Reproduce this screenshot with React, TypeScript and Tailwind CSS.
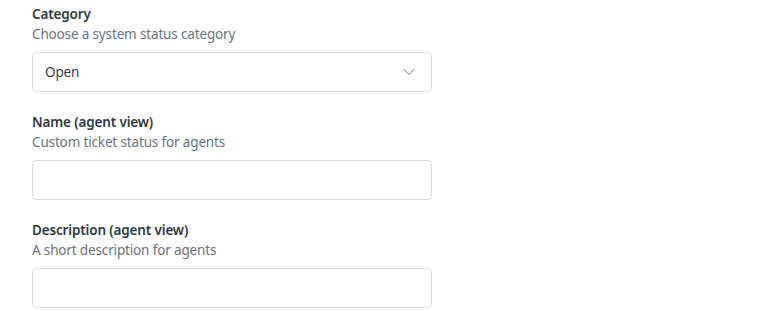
import { ChevronDown } from 'lucide-react';

const font = { fontFamily: '"Noto Sans", "Open Sans", sans-serif' };

interface FieldProps {
  label: string;
  hint: string;
  children: React.ReactNode;
}

function Field({ label, hint, children }: FieldProps) {
  return (
    <div className="flex flex-col">
      <label className="text-[13.5px] leading-5 font-semibold tracking-[-0.15px] text-[#2f3941]">{label}</label>
      <span className="text-[13.5px] leading-5 tracking-[-0.15px] text-[#68737d]">{hint}</span>
      <div className="mt-2">{children}</div>
    </div>
  );
}

export default function App() {
  return (
    <div className="bg-white w-[771px] h-[318px] pl-8 pt-1" style={font}>
      <div className="w-[400px] flex flex-col gap-5">
        <Field label="Category" hint="Choose a system status category">
          <div className="h-10 flex items-center justify-between border border-[#d8dcde] rounded px-3 text-[13.5px] tracking-[-0.15px] text-[#2f3941]">
            <span>Open</span>
            <ChevronDown className="w-5 h-5 text-[#68737d]" strokeWidth={1.2} />
          </div>
        </Field>
        <Field label="Name (agent view)" hint="Custom ticket status for agents">
          <input className="w-full h-10 border border-[#d8dcde] rounded px-3 text-[14px] outline-none" />
        </Field>
        <Field label="Description (agent view)" hint="A short description for agents">
          <input className="w-full h-10 border border-[#d8dcde] rounded px-3 text-[14px] outline-none" />
        </Field>
      </div>
    </div>
  );
}
